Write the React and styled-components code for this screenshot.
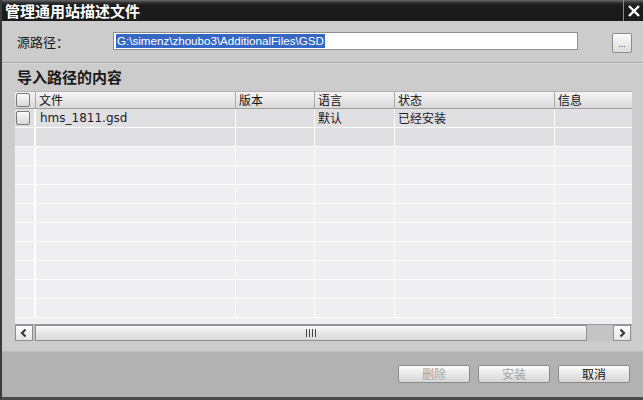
import React from "react";
import styled, { createGlobalStyle } from "styled-components";

const GlobalStyle = createGlobalStyle`
  html, body {
    margin: 0;
    padding: 0;
    background: #cbcbcb;
  }
  * {
    box-sizing: border-box;
  }
`;

const cjk = `"Noto Sans CJK SC", "Noto Sans", sans-serif`;
const latin = `"DejaVu Sans", "Noto Sans CJK SC", sans-serif`;

const COLS = "20px 200px 79px 80px 160px 78px";

const Window = styled.div`
  width: 643px;
  height: 400px;
  display: flex;
  flex-direction: column;
  border-left: 2px solid #3a3a3a;
  border-bottom: 3px solid #4a4a4a;
  font-family: ${cjk};
  overflow: hidden;
`;

const TitleBar = styled.div`
  height: 21px;
  flex: none;
  display: flex;
  align-items: center;
  background: linear-gradient(#6a6a6a 0px, #2a2a2a 3px, #1b1b1b 6px, #1b1b1b 100%);
  margin-left: -2px;
`;

const Title = styled.div`
  flex: 1;
  padding-left: 5px;
  color: #fff;
  font-weight: 700;
  font-size: 15px;
  line-height: 21px;
`;

const CloseButton = styled.div`
  width: 20px;
  height: 21px;
  border-left: 1px solid #8a8a8a;
  display: flex;
  align-items: center;
  justify-content: center;
`;

const Panel = styled.div`
  flex: none;
  display: flex;
  flex-direction: column;
  padding: 0 11px 10px 13px;
  background: #cccccc;
`;

const PathRow = styled.div`
  height: 42px;
  display: flex;
  align-items: center;
  margin-right: -11px;
  margin-left: -13px;
  padding: 0 11px 0 15px;
  border-bottom: 1px solid #a9a9a9;
  box-shadow: 0 1px 0 #dadada;
`;

const Label = styled.div`
  width: 96px;
  font-size: 13px;
  color: #1a1a1a;
`;

const PathInput = styled.div`
  width: 465px;
  height: 18px;
  background: #fff;
  border: 1px solid #8e8e8e;
  display: flex;
  align-items: center;
  padding-left: 2px;
  margin-top: -1px;
`;

const Selected = styled.span`
  background: #3468c4;
  color: #fff;
  font-family: "Liberation Sans", sans-serif;
  font-size: 11.6px;
  line-height: 14px;
  padding: 0 1px;
`;

const BrowseButton = styled.div`
  margin-left: auto;
  width: 20px;
  height: 20px;
  border: 1px solid #8c8c8c;
  border-radius: 2px;
  background: linear-gradient(#fbfbfb, #dcdcdc);
  display: flex;
  align-items: flex-end;
  justify-content: center;
  padding-bottom: 5px;
  font-family: "Liberation Sans", sans-serif;
  font-size: 9px;
  line-height: 6px;
  color: #333;
  margin-top: 2px;
`;

const SectionTitle = styled.div`
  height: 28px;
  padding: 5px 0 0 2px;
  font-weight: 700;
  font-size: 15px;
  line-height: 18px;
  color: #1a1a1a;
`;

const Table = styled.div`
  width: 617px;
  display: flex;
  flex-direction: column;
`;

const HeaderRow = styled.div`
  height: 18px;
  display: grid;
  grid-template-columns: ${COLS};
  background: linear-gradient(#f4f4f4, #e6e6e6 55%, #d9d9d9);
  border-top: 1px solid #b4b4b4;
  border-bottom: 1px solid #9e9e9e;
`;

const HeadCell = styled.div`
  border-left: ${(p) => (p.$first ? "none" : "1px solid #a9a9a9")};
  padding-left: 3px;
  font-size: 12px;
  line-height: 16px;
  color: #111;
  display: flex;
  align-items: center;
`;

const Body = styled.div`
  height: 215px;
  overflow: hidden;
  background: #efeef0;
`;

const Row = styled.div`
  height: 19px;
  display: grid;
  grid-template-columns: ${COLS};
  background: ${(p) => (p.$shade ? "#e0dfe1" : "#efeef0")};
  border-bottom: 1px solid #fdfdfd;
`;

const Cell = styled.div`
  border-left: ${(p) => (p.$first ? "none" : "1px solid #fdfdfd")};
  border-right: ${(p) => (p.$first ? "1px solid #fdfdfd" : "none")};
  padding-left: ${(p) => (p.$latin ? "4px" : "3px")};
  font-family: ${(p) => (p.$latin ? latin : cjk)};
  font-size: 12px;
  line-height: 18px;
  color: #1c1c2a;
  display: flex;
  align-items: center;
  white-space: nowrap;
`;

const Check = styled.div`
  width: 14px;
  height: 14px;
  margin-left: -2px;
  border: 1px solid #7a7a7a;
  border-radius: 2px;
  background: linear-gradient(#fafafa, #d8d8d8);
`;

const ScrollBar = styled.div`
  height: 17px;
  display: flex;
  align-items: stretch;
  background: #c4c4c4;
  border-top: 1px solid #9a9a9a;
`;

const ScrollButton = styled.div`
  width: 18px;
  border: 1px solid #8f8f8f;
  background: linear-gradient(#fdfdfd, #e4e4e4);
  display: flex;
  align-items: center;
  justify-content: center;
  margin-left: ${(p) => (p.$right ? "auto" : "0")};
  margin-right: ${(p) => (p.$right ? "1px" : "0")};
`;

const Thumb = styled.div`
  width: 552px;
  margin-left: 2px;
  border: 1px solid #8f8f8f;
  background: linear-gradient(#fafafa, #e6e6e6 50%, #dadada);
  display: flex;
  align-items: center;
  justify-content: center;
  gap: 1px;
`;

const Grip = styled.span`
  width: 1px;
  height: 8px;
  background: #444;
  margin: 0 0.5px;
`;

const Footer = styled.div`
  flex: 1;
  display: flex;
  align-items: center;
  justify-content: flex-end;
  gap: 8px;
  padding: 0 13px 0 0;
  background: #b3b2b3;
  border-top: 1px solid #bcbcbc;
`;

const Button = styled.div`
  width: 72px;
  height: 18px;
  border: 1px solid #8a8a8a;
  border-radius: 2px;
  background: linear-gradient(#fbfbfb, #e8e8e8 50%, #d6d6d6);
  display: flex;
  align-items: center;
  justify-content: center;
  font-size: 12px;
  color: ${(p) => (p.disabled ? "#a3a3a3" : "#111")};
  margin-top: -2px;
`;

const Arrow = ({ dir }) => (
  <svg width="8" height="10" viewBox="0 0 8 10">
    <path
      d={dir === "left" ? "M5.5 1.5 L2 5 L5.5 8.5" : "M2.5 1.5 L6 5 L2.5 8.5"}
      fill="none"
      stroke="#3a3a3a"
      strokeWidth="2.2"
    />
  </svg>
);

const rows = [
  { file: "hms_1811.gsd", version: "", lang: "默认", state: "已经安装", info: "" },
  { file: "", version: "", lang: "", state: "", info: "" },
];

const App = () => {
  const empty = Array.from({ length: 9 });
  return (
    <>
      <GlobalStyle />
      <Window>
        <TitleBar>
          <Title>管理通用站描述文件</Title>
          <CloseButton>
            <svg width="14" height="14" viewBox="0 0 14 14">
              <path d="M2 2 L12 12 M12 2 L2 12" stroke="#fff" strokeWidth="2.4" />
            </svg>
          </CloseButton>
        </TitleBar>
        <Panel>
          <PathRow>
            <Label>源路径：</Label>
            <PathInput>
              <Selected>G:\simenz\zhoubo3\AdditionalFiles\GSD</Selected>
            </PathInput>
            <BrowseButton>...</BrowseButton>
          </PathRow>
          <SectionTitle>导入路径的内容</SectionTitle>
          <Table>
            <HeaderRow>
              <HeadCell $first>
                <Check />
              </HeadCell>
              <HeadCell>文件</HeadCell>
              <HeadCell>版本</HeadCell>
              <HeadCell>语言</HeadCell>
              <HeadCell>状态</HeadCell>
              <HeadCell>信息</HeadCell>
            </HeaderRow>
            <Body>
              {rows.map((r, i) => (
                <Row key={i} $shade>
                  <Cell $first>{i === 0 && <Check />}</Cell>
                  <Cell $latin>{r.file}</Cell>
                  <Cell>{r.version}</Cell>
                  <Cell>{r.lang}</Cell>
                  <Cell>{r.state}</Cell>
                  <Cell>{r.info}</Cell>
                </Row>
              ))}
              {empty.map((_, i) => (
                <Row key={"e" + i}>
                  <Cell $first />
                  <Cell />
                  <Cell />
                  <Cell />
                  <Cell />
                  <Cell />
                </Row>
              ))}
            </Body>
            <ScrollBar>
              <ScrollButton>
                <Arrow dir="left" />
              </ScrollButton>
              <Thumb>
                <Grip />
                <Grip />
                <Grip />
                <Grip />
              </Thumb>
              <ScrollButton $right>
                <Arrow dir="right" />
              </ScrollButton>
            </ScrollBar>
          </Table>
        </Panel>
        <Footer>
          <Button disabled>删除</Button>
          <Button disabled>安装</Button>
          <Button>取消</Button>
        </Footer>
      </Window>
    </>
  );
};

export default App;
